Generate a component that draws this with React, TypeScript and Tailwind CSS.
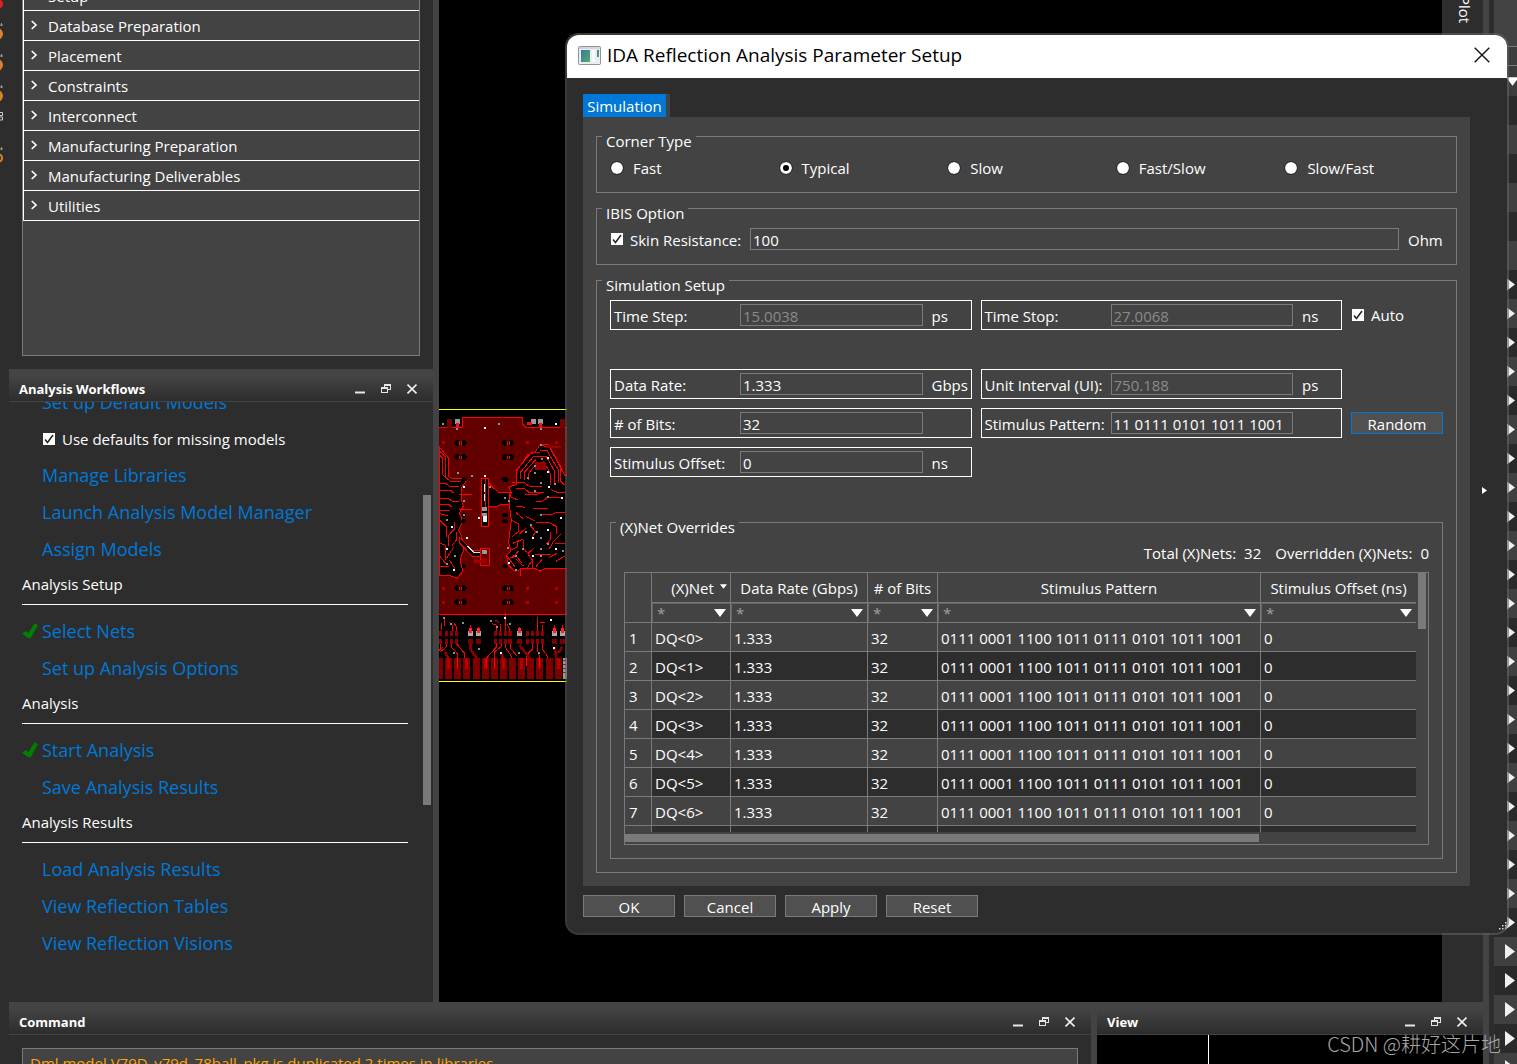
import type { ReactNode } from "react";
import clsx from "clsx";

const FLOW_GROUPS = [
  "Setup",
  "Database Preparation",
  "Placement",
  "Constraints",
  "Interconnect",
  "Manufacturing Preparation",
  "Manufacturing Deliverables",
  "Utilities",
];

const CORNERS = ["Fast", "Typical", "Slow", "Fast/Slow", "Slow/Fast"];

const PATTERN = "0111 0001 1100 1011 0111 0101 1011 1001";

const NETS = ["DQ<0>", "DQ<1>", "DQ<2>", "DQ<3>", "DQ<4>", "DQ<5>", "DQ<6>", "DQ<7>"];

const COLUMNS = ["(X)Net", "Data Rate (Gbps)", "# of Bits", "Stimulus Pattern", "Stimulus Offset (ns)"];

/* ---------- small drawings ---------- */

function CheckMark() {
  return (
    <svg viewBox="0 0 16 16" className="size-4" aria-hidden="true">
      <path d="M0 10.5 4 8l2.300 2.300L12.500.5 16 2 8.500 15.500 5 14.500Z" fill="#008000" />
    </svg>
  );
}

function DockIcons({ name }: { name: string }) {
  return (
    <div className="flex items-center gap-4">
      <button type="button" aria-label={`Minimize ${name}`}>
        <svg viewBox="0 0 10 12" className="h-3 w-2.5">
          <path d="M0 9.500h10" stroke="#e6e6e6" strokeWidth="2" />
        </svg>
      </button>
      <button type="button" aria-label={`Float ${name}`}>
        <svg viewBox="0 0 10 12" className="h-3 w-2.5" fill="#e6e6e6">
          <path d="M3 1h7v6H7V6h2V3H4v1H3Z" />
          <path fillRule="evenodd" d="M0 4h7v6H0ZM1 6v3h5V6Z" />
        </svg>
      </button>
      <button type="button" aria-label={`Close ${name}`}>
        <svg viewBox="0 0 10 12" className="h-3 w-2.5">
          <path d="m.5 1.500 9 9m0-9-9 9" stroke="#f2f2f2" strokeWidth="1.600" />
        </svg>
      </button>
    </div>
  );
}

function DownTriangle({ className }: { className?: string }) {
  return (
    <svg viewBox="0 0 12 8" className={className} aria-hidden="true">
      <path d="M0 0h12L6 8Z" fill="#fff" />
    </svg>
  );
}

function AppIcon() {
  return (
    <svg viewBox="0 0 23 19" className="h-[19px] w-[23px]" aria-hidden="true">
      <defs>
        <linearGradient id="pane" x1="0" y1="0" x2="1" y2="1">
          <stop offset="0" stopColor="#3f73a0" />
          <stop offset="1" stopColor="#4fb06e" />
        </linearGradient>
      </defs>
      <rect x=".5" y=".5" width="22" height="18" rx="1" fill="#e9edf1" stroke="#8d949b" />
      <rect x="1" y="1" width="21" height="2" fill="#cfd6dd" />
      <rect x="3" y="4" width="9" height="12" fill="url(#pane)" />
      <rect x="14" y="4" width="3" height="12" fill="#f8f8f8" />
      <rect x="19" y="4" width="2" height="7" fill="url(#pane)" />
    </svg>
  );
}

const VIA_ROWS = [128, 171, 564, 606];
const VIA_COLS = [74, 216];
const DOTS: [number, number][] = [
  [147, 84], [21, 72], [190, 72], [360, 72], [64, 88], [314, 88], [84, 261], [84, 303], [84, 345], [93, 414],
  [66, 219], [108, 228], [147, 228], [162, 261], [207, 294], [129, 354], [216, 444], [219, 303], [33, 447],
  [57, 468], [33, 492], [54, 510], [261, 447], [240, 468], [219, 489], [240, 510], [315, 447], [291, 468],
  [315, 468], [336, 432], [360, 447], [382, 453], [315, 414], [291, 414], [270, 396], [303, 396], [336, 390],
  [315, 345], [285, 375], [375, 354], [297, 273], [315, 249], [339, 261], [357, 252], [336, 291], [378, 294],
  [276, 234], [297, 219], [336, 216], [297, 198], [318, 177], [336, 174], [315, 135], [33, 360], [48, 381],
  [24, 654], [165, 663], [207, 654], [54, 759], [129, 747], [195, 759], [249, 759], [310, 759], [354, 744],
  [45, 672], [80, 668], [345, 660], [182, 680], [222, 672],
];
const PADS = [14, 31, 46, 61, 104, 127, 179, 194, 209, 222, 250, 274, 289, 305, 319, 355, 379];

/** Copper layer of the memory board visible left of the dialog. */
function BoardCanvas() {
  return (
    <svg
      viewBox="9 0 384 870"
      className="h-[290px] w-32"
      fill="none"
      shapeRendering="crispEdges"
      aria-label="Board layout"
    >
      <path d="M9 80h71V52h180v28h133v563H9Z" fill="#620000" />
      <path d="M260 40h133v40H269l-9-10Z" fill="#000" />
      <path d="M9 82h71V52h180v21l9 9h124M9 642h384" stroke="#f00" strokeWidth="3" />
      <path d="M9 28h384M9 844h384" stroke="#ff0" strokeWidth="3" />

      {/* routed areas without plane fill */}
      <path
        d="M9 140 38 175v55l10 6h28l14 8-14 20v34l6 20-12 22 10 24-12 26 8 18 8 40-12 30 8 36-16 20-24-8H9Z"
        fill="#000"
        stroke="#f00"
        strokeWidth="3"
      />
      <path
        d="m312 134 30 10 44 82h10v280h-70l-14 8-14-8h-40l-20 8-22-20-4-28 12-12-6-28 8-66-8-60 8-20-8-18 22-8v-38l36-52 22-8Z"
        fill="#000"
        stroke="#f00"
        strokeWidth="3"
      />
      <path d="M136 236h22v142h-22z" fill="#000" stroke="#f00" strokeWidth="3" />
      <path d="M158 250l30 28h32v34h-22l-16 8h-24Z" fill="#000" stroke="#f00" strokeWidth="3" />
      <path d="M70 412l40 40h24v16h-26l-38-40Z" fill="#000" stroke="#f00" strokeWidth="3" />
      <path d="M134 445h26v51h-26z" fill="#620000" stroke="#f00" strokeWidth="3" />
      <path d="M70 283h38M70 328h38M254 504v24" stroke="#f00" strokeWidth="3" />
      <path d="M114 484h38" stroke="#a80000" strokeWidth="9" />

      {/* left escape traces */}
      <path
        d="M9 152l18 18v64M9 164l9 9v50l24 20h34M9 250h20l12 9h28M9 272h36l10 8M9 294h24l16 9h20M9 312h28l10 10M9 330h32M9 340l28 8M12 362l20 20v28M54 366v22l-18 20v30M60 396v26l-12 14M9 428l20 8v44M54 440l-22 34M12 470l22 26M40 480l18 28M9 500h30"
        stroke="#f00"
        strokeWidth="3"
      />
      {/* right escape traces */}
      <path
        d="M242 232v-22l44-52h26M254 236v-20l38-46h36M266 240v-24l34-38M278 240v-20l26-32h24M312 134h26l36 66v44l12 12M312 150h20l34 58v42M318 168h12l26 46v38M322 184l20 34v36M300 200l6-14h14l8 20-24 4M228 246h34l20 14h36M240 264h24l14 12h46M268 284h36l12-8M344 268l22 10h20M226 292l20 8M240 318l28 4M300 304h20l14-12h46M292 324h44M318 344h30l14-8h24M240 338l22 18M270 350l28 14M300 366h36l26 14v22M226 360l22 12v22l-20 16M250 402l20-18M282 376l18 20-12 16M342 396v24l-10 12M374 404l-20 18-14 24M388 430l-30 2M230 430l30-12M222 452l22-12v-18M248 452l-18 22M262 420v24l26 34v26M274 462l20-18M296 462h50M318 478l-18 22M338 474l24-14M360 484l26-16M240 478l22 20M212 466l26 36M220 476l18-12 18 24M272 508l14-24"
        stroke="#f00"
        strokeWidth="3"
      />
      <path d="M300 190h26v16h-26zM330 142h44" fill="#800" stroke="#900" strokeWidth="6" />

      {/* centre component */}
      <path d="M147 228v92" stroke="#f00" strokeWidth="3" />
      <path d="M146 252v24M146 282v20" stroke="#fff" strokeWidth="3" />
      <path d="M138 320h16v12h-16zM138 340h16v8h-16zM138 450h16v12h-16z" fill="#999" />
      <path d="M140 348h13v18h-13z" fill="#eee" />
      <path d="M95 438l18 18h18" stroke="#ddd" strokeWidth="3" />
      <path d="M138 474h15v15h-15z" fill="#900" />

      {/* decoupling vias */}
      {VIA_ROWS.map((y) =>
        VIA_COLS.map((x) => (
          <g key={`${x}-${y}`}>
            <path d={`M${x - 20} ${y}l7-8h8l5 4 5-4h8l6 8-6 9h-8l-5-4-5 4h-8Z`} fill="#000" />
            <path d={`M${x - 3} ${y - 4}v10M${x + 3} ${y - 4}v10`} stroke="#f00" strokeWidth="3" />
          </g>
        ))
      )}
      {[128, 564, 606].map((y) => (
        <path key={y} d={`M270 ${y}h9M357 ${y}h9M18 ${y}h9`} stroke="#a00" strokeWidth="9" />
      ))}
      {[238, 345, 363, 498].map((y) => (
        <path key={y} d={`M78 ${y - 6}h8l6 6-6 7h-8zM202 ${y - 6}h10l6 6-6 7h-10l-6-7z`} fill="#000" />
      ))}
      <path d="M33 57h15v26H33zM372 57h15v26h-15z" fill="#700" />
      <path d="M57 57h15v14H57zM306 57h15v14h-15zM285 57h15v14h-15z" fill="#999" />
      <path d="M60 68h10v14H60zM309 68h10v14h-10zM274 66h14v9h-14z" fill="#e11" />

      {/* connector strip */}
      <path d="M9 647h384v126H9z" fill="#000" />
      <path
        d="M24 655v24M16 690v-20M48 695v-20l-9-9M62 695v-14l-8-12M104 690v-14M127 690v-10M180 695v-20l-12-4M194 695v-24M207 640v34l3 18M222 692l-8-20M250 690v-10M305 692v-40M319 692v-16M312 667h15M355 690v-14M379 690v-14M190 668l-12-8"
        stroke="#f00"
        strokeWidth="3"
      />
      {PADS.map((x) => (
        <path key={x} d={`M${x - 5} 694h10v14h-10zM${x - 5} 717h10v14h-10z`} fill="#900000" />
      ))}
      {[104, 127, 250, 355, 379].map((x) => (
        <g key={x}>
          <path d={`M${x - 8} 692h15v16h-15z`} fill="#aaa" />
          <path d={`M${x - 5} 683h9v16h-9z`} fill="#f22" />
          <path d={`M${x - 8} 717h15v14h-15z`} fill="#700" />
        </g>
      ))}
      <path
        d="M9 752l12-10M14 731v14l-5 6M31 731v10l-20 16M46 731v10l18 20v45M61 731l24 28v40M150 806v-30l30-34v-11M175 806v-50l20-15v-10M209 731v12l17 26v35M222 731v12l22 26M289 731v16l-18 20v30M305 731v20l5 18v30M319 731v16l14 20v38"
        stroke="#f00"
        strokeWidth="3"
      />
      <path
        d="M104 731v18l19 26v12M27 756l10 18M196 760l6 20M250 735l32 40M355 740l6 34M379 740l-8 14-14 4"
        stroke="#8a0000"
        strokeWidth="8"
      />
      {Array.from({ length: 14 }, (_, i) => (
        <g key={i}>
          <path d={`M${Math.round(i * 27.4)} 774h21v63h-21z`} fill="#7c0000" />
          {i % 2 === 1 && <path d={`M${Math.round(i * 27.4) + 6} 774h9v33h-9z`} fill="#b80000" />}
        </g>
      ))}
      <path d="M64 774v32M150 774v30M175 774v32M310 774v24" stroke="#f00" strokeWidth="3" />
      <path d="M381 774h12v63h-12z" fill="#999" />
      <path d="M381 782h10M381 794h8M381 806h10M381 818h8" stroke="#b00" strokeWidth="3" />
      {DOTS.map(([x, y], i) => (
        <rect key={i} x={x - 3} y={y - 3} width="6" height="6" fill={i % 3 === 0 ? "#fff" : "#8f8f8f"} />
      ))}
    </svg>
  );
}

/* ---------- docked panels ---------- */

function DockTitle({ title }: { title: string }) {
  return (
    <div className="flex h-[33px] shrink-0 items-center justify-between border-b border-[#434343] bg-linear-to-b from-[#444] from-20% to-[#2d2d2d] pt-2 pr-4 pl-2.5">
      <h2 className="text-[13px] leading-5 font-bold">{title}</h2>
      <DockIcons name={title} />
    </div>
  );
}

function FlowLink({ children, done }: { children: ReactNode; done?: boolean }) {
  return (
    <div className="flex h-[37px] items-center pb-0.5">
      <span className="w-5">{done && <CheckMark />}</span>
      <a href="#" className="text-[18px] leading-6 text-[#0078d7]">
        {children}
      </a>
    </div>
  );
}

function FlowHeading({ children }: { children: ReactNode }) {
  return <h3 className="mr-[25px] mb-2 flex h-[37px] items-center border-b border-white pb-1">{children}</h3>;
}

function LeftDock() {
  return (
    <div className="flex w-[424px] shrink-0 flex-col">
      <div className="mx-[13px] flex h-[356px] shrink-0 flex-col overflow-hidden border border-t-0 border-[#7a7a7a] bg-[#434343]">
        <ul className="-mt-[19px] border-l border-white">
          {FLOW_GROUPS.map((g) => (
            <li key={g} className="flex h-[30px] items-center border-b border-white">
              <svg viewBox="0 0 6 10" className="mr-[11px] mb-0.5 ml-[7px] h-2.5 w-1.5" fill="none" aria-hidden="true">
                <path d="m.7 1 4.300 4-4.300 4" stroke="#fff" strokeWidth="1.600" />
              </svg>
              {g}
            </li>
          ))}
        </ul>
      </div>
      <div className="mt-[13px]">
        <DockTitle title="Analysis Workflows" />
      </div>
      <div className="flex min-h-0 flex-1 overflow-hidden">
        <div className="-mt-[18px] flex-1 pl-[13px]">
          <FlowLink>Set up Default Models</FlowLink>
          <label className="flex h-9 items-center pl-[21px]">
            <Tick defaultChecked />
            <span className="ml-[7px]">Use defaults for missing models</span>
          </label>
          <FlowLink>Manage Libraries</FlowLink>
          <FlowLink>Launch Analysis Model Manager</FlowLink>
          <FlowLink>Assign Models</FlowLink>
          <FlowHeading>Analysis Setup</FlowHeading>
          <FlowLink done>Select Nets</FlowLink>
          <FlowLink>Set up Analysis Options</FlowLink>
          <FlowHeading>Analysis</FlowHeading>
          <FlowLink done>Start Analysis</FlowLink>
          <FlowLink>Save Analysis Results</FlowLink>
          <FlowHeading>Analysis Results</FlowHeading>
          <FlowLink>Load Analysis Results</FlowLink>
          <FlowLink>View Reflection Tables</FlowLink>
          <FlowLink>View Reflection Visions</FlowLink>
        </div>
        <div className="-ml-2.5 w-2.5 pt-[93px]">
          <div className="h-[310px] w-2 bg-[#7a7a7a]" />
        </div>
      </div>
    </div>
  );
}

/* ---------- form parts ---------- */

function Tick({ defaultChecked }: { defaultChecked?: boolean }) {
  return (
    <span className="grid size-3 shrink-0">
      <input
        type="checkbox"
        defaultChecked={defaultChecked}
        className="peer col-start-1 row-start-1 size-3 appearance-none bg-white"
      />
      <svg
        viewBox="0 0 12 12"
        className="pointer-events-none col-start-1 row-start-1 hidden size-3 peer-checked:block"
        fill="none"
      >
        <path d="m2 6.500 2.500 3L10 2" stroke="#222" strokeWidth="1.500" />
      </svg>
    </span>
  );
}

function Group({ title, children, className }: { title: string; children: ReactNode; className?: string }) {
  return (
    <fieldset className={clsx("min-w-0 border border-[#7a7a7a] pl-[5px]", className)}>
      <legend className="px-1 pt-[11px] pb-px leading-[17px]">{title}</legend>
      {children}
    </fieldset>
  );
}

type FieldProps = { id: string; label: string; value: string; unit?: string; disabled?: boolean };

function Field({ id, label, value, unit, disabled }: FieldProps) {
  return (
    <div className="flex h-[30px] min-w-0 items-center border border-white px-[3px]">
      <label htmlFor={id} className="w-[126px] shrink-0 whitespace-nowrap pt-0.5">
        {label}
      </label>
      <input
        id={id}
        defaultValue={value}
        disabled={disabled}
        className="h-[22px] min-w-0 flex-1 border border-[#7a7a7a] bg-transparent px-0.5 pt-0.5 disabled:text-[#8a8a8a]"
      />
      <span className="ml-[9px] w-9 shrink-0 pt-0.5">{unit}</span>
    </div>
  );
}

function PushButton({ children, accent }: { children: ReactNode; accent?: boolean }) {
  return (
    <button
      type="button"
      className={clsx(
        "flex h-[22px] w-[92px] items-center justify-center border bg-[#505050] pt-0.5",
        accent ? "border-[#0078d7]" : "border-[#7a7a7a]"
      )}
    >
      {children}
    </button>
  );
}

function NetTable() {
  return (
    <div className="border border-[#7a7a7a]">
      <div className="flex">
        <div className="h-[259px] min-w-0 flex-1 overflow-hidden">
          <table className="w-full table-fixed border-separate border-spacing-0 whitespace-nowrap">
            <colgroup>
              <col className="w-[27px]" />
              <col className="w-[79px]" />
              <col className="w-[137px]" />
              <col className="w-[70px]" />
              <col className="w-[323px]" />
              <col />
            </colgroup>
            <thead>
              <tr className="h-[30px]">
                <td rowSpan={2} className="border-r border-b border-[#7a7a7a]" />
                {COLUMNS.map((c, i) => (
                  <th
                    key={c}
                    scope="col"
                    className="border-r border-b border-[#7a7a7a] p-0 font-normal last:border-r-0"
                  >
                    <span className={clsx("flex items-center justify-center", i === 0 && "pl-4")}>
                      {c}
                      {i === 0 && <DownTriangle className="mb-0.5 ml-1.5 h-[5px] w-[7px]" />}
                    </span>
                  </th>
                ))}
              </tr>
              <tr className="h-5">
                {COLUMNS.map((c) => (
                  <td
                    key={c}
                    className="border-t border-r border-b border-l border-[#7a7a7a] border-t-[#656565] border-l-[#656565] p-0 last:border-r-0"
                  >
                    <span className="flex h-[18px] items-center pr-1">
                      <input
                        aria-label={`Filter ${c}`}
                        placeholder="*"
                        className="h-[18px] min-w-0 flex-1 bg-transparent px-1 placeholder:text-[#a0a0a0]"
                      />
                      <DownTriangle className="h-2 w-3 shrink-0" />
                    </span>
                  </td>
                ))}
              </tr>
            </thead>
            <tbody>
              {NETS.map((net, i) => (
                <tr key={net} className="h-[29px] odd:bg-[#434343] even:bg-[#2d2d2d]">
                  <th
                    scope="row"
                    className="border-r border-b border-[#7a7a7a] bg-[#434343] p-0 pt-0.5 pl-1 text-left font-normal"
                  >
                    {i + 1}
                  </th>
                  {[net, "1.333", "32", PATTERN, "0"].map((cell, j) => (
                    <td key={j} className="border-r border-b border-[#7a7a7a] p-0 pt-0.5 pl-[3px] last:border-r-0">
                      {cell}
                    </td>
                  ))}
                </tr>
              ))}
            </tbody>
          </table>
        </div>
        <div className="w-3 pl-0.5">
          <div className="h-14 w-2 bg-[#7a7a7a]" />
        </div>
      </div>
      <div className="py-0.5">
        <div className="h-2 w-[79%] bg-[#7a7a7a]" />
      </div>
    </div>
  );
}

function SetupDialog() {
  return (
    <section
      role="dialog"
      aria-labelledby="dialog-title"
      className="absolute top-[35px] right-2.5 left-[567px] overflow-hidden rounded-xl bg-[#2d2d2d] shadow-[0_0_0_2px_#60606099]"
    >
      <header className="flex h-[43px] items-center bg-white pr-[17px] pb-[3px] pl-[11px] text-black">
        <AppIcon />
        <h1 id="dialog-title" className="ml-1.5 flex-1 text-[19px] leading-6">
          IDA Reflection Analysis Parameter Setup
        </h1>
        <button type="button" aria-label="Close dialog">
          <svg viewBox="0 0 16 16" className="size-4">
            <path d="m.7.7 14.600 14.600m0-14.600L.7 15.300" stroke="#111" strokeWidth="1.400" />
          </svg>
        </button>
      </header>

      <div className="flex pt-4 pb-4 pl-4">
        <div className="min-w-0 flex-1">
          <div className="flex" role="tablist">
            <button
              type="button"
              role="tab"
              aria-selected="true"
              className="flex h-[23px] w-[83px] items-center justify-center bg-[#0078d7]"
            >
              Simulation
            </button>
            <span className="w-1 bg-[#434343]" />
          </div>

          <div className="flex flex-col gap-px bg-[#434343] px-[13px] pt-[5px] pb-[13px]">
            <Group title="Corner Type" className="pr-0.5">
              <div className="grid grid-cols-5 pt-[7px] pb-3.5 pl-[9px]">
                {CORNERS.map((c) => (
                  <label key={c} className="flex h-5 items-center">
                    <input
                      type="radio"
                      name="corner"
                      defaultChecked={c === "Typical"}
                      className="size-3 appearance-none rounded-full border-white bg-white outline outline-[#2a2a2a] checked:border-3 checked:bg-black"
                    />
                    <span className="ml-2.5">{c}</span>
                  </label>
                ))}
              </div>
            </Group>

            <Group title="IBIS Option" className="pr-[13px]">
              <div className="flex items-center pt-[5px] pb-3.5 pl-[9px]">
                <label className="flex w-[139px] shrink-0 items-center whitespace-nowrap">
                  <Tick defaultChecked />
                  <span className="ml-[7px] pt-0.5">Skin Resistance:</span>
                </label>
                <input
                  aria-label="Skin Resistance"
                  defaultValue="100"
                  className="h-[22px] min-w-0 flex-1 border border-[#7a7a7a] bg-transparent px-0.5 pt-0.5"
                />
                <span className="ml-[9px] w-[35px] pt-0.5">Ohm</span>
              </div>
            </Group>

            <Group title="Simulation Setup" className="pr-[13px] pb-[13px]">
              <div className="pt-[5px] pl-2">
                <div className="grid grid-cols-[1fr_1fr_92px] gap-[9px]">
                  <Field id="time-step" label="Time Step:" value="15.0038" unit="ps" disabled />
                  <Field id="time-stop" label="Time Stop:" value="27.0068" unit="ns" disabled />
                  <label className="flex items-center pl-px">
                    <Tick defaultChecked />
                    <span className="ml-[7px]">Auto</span>
                  </label>
                </div>
                <div className="mt-[39px] grid grid-cols-[1fr_1fr_92px] items-center gap-[9px]">
                  <Field id="data-rate" label="Data Rate:" value="1.333" unit="Gbps" />
                  <Field id="unit-interval" label="Unit Interval (UI):" value="750.188" unit="ps" disabled />
                  <span />
                  <Field id="bits" label="# of Bits:" value="32" />
                  <Field id="pattern" label="Stimulus Pattern:" value={PATTERN.slice(-22)} />
                  <PushButton accent>Random</PushButton>
                  <Field id="offset" label="Stimulus Offset:" value="0" unit="ns" />
                </div>

                <Group title="(X)Net Overrides" className="mt-[31px] pr-[13px] pb-[13px]">
                  <div className="pt-1.5 pl-2">
                    <p className="mb-[9px] flex h-5 items-center justify-end">
                      <span>Total (X)Nets:</span>
                      <span className="ml-2">32</span>
                      <span className="ml-3.5">Overridden (X)Nets:</span>
                      <span className="ml-2">0</span>
                    </p>
                    <NetTable />
                  </div>
                </Group>
              </div>
            </Group>
          </div>

          <div className="mt-[9px] flex gap-[9px]">
            <PushButton>OK</PushButton>
            <PushButton>Cancel</PushButton>
            <PushButton>Apply</PushButton>
            <PushButton>Reset</PushButton>
          </div>
        </div>

        <div className="flex w-[37px] items-center pb-[31px] pl-3">
          <button type="button" aria-label="Expand side panel">
            <svg viewBox="0 0 5 7" className="h-[7px] w-[5px]">
              <path d="M0 0l5 3.500L0 7Z" fill="#fff" />
            </svg>
          </button>
        </div>
      </div>

      <svg viewBox="0 0 9 9" className="absolute right-0 bottom-0.5 size-[9px]" fill="#ddd" aria-hidden="true">
        <path d="M7 0h1.500v1.500H7zM4 3h1.500v1.500H4zM7 3h1.500v1.500H7zM1 6h1.500v1.500H1zM4 6h1.500v1.500H4z" />
      </svg>
    </section>
  );
}

/* ---------- window edges ---------- */

function ToolSliver() {
  return (
    <div className="w-[9px] shrink-0">
      <svg viewBox="0 0 9 170" className="h-[170px] w-[9px]" fill="none" aria-hidden="true">
        <circle cx="-2" cy="4" r="5" fill="#e02020" />
        {[34, 65, 96].map((y) => (
          <g key={y}>
            <circle cx="-3" cy={y} r="6" fill="#d9822b" />
            <path d={`M0 ${y - 9}h3M1.500 ${y - 11}v3`} stroke="#999" />
          </g>
        ))}
        <path d="M0 112.500h2.500v3H0m0 1.500h2.500v3H0" stroke="#ccc" />
        <circle cx="-2" cy="158" r="4" stroke="#d9822b" strokeWidth="2" />
        <path d="M0 149h3M1.500 147v3" stroke="#999" />
      </svg>
    </div>
  );
}

function RightList() {
  return (
    <div className="flex w-7 shrink-0 flex-col overflow-hidden pl-[5px]">
      <div className="h-[46px] shrink-0 bg-[#434343]" />
      <div className="h-5 shrink-0 border-y border-[#7a7a7a] bg-[#3c3c3c]" />
      <div className="h-[30px] shrink-0 bg-[#3c3c3c] pt-2.5">
        <DownTriangle className="ml-3 h-[11px] w-[13px]" />
      </div>
      {Array.from({ length: 34 }, (_, i) => (
        <div key={i} className="flex h-[29px] shrink-0 items-center pl-[11px] odd:bg-[#404040] even:bg-[#2a2a2a]">
          {i > 5 && (
            <svg viewBox="0 0 10 15" className="h-[15px] w-2.5" aria-hidden="true">
              <path d="M0 0l10 7.500L0 15Z" fill="#f0f0f0" />
            </svg>
          )}
        </div>
      ))}
    </div>
  );
}

export default function App() {
  return (
    <main className="relative flex h-screen w-full overflow-hidden bg-[#2d2d2d] font-['Open_Sans','Noto_Sans_CJK_SC',sans-serif] text-[15px] leading-5 text-white">
      <ToolSliver />
      <div className="flex min-w-0 flex-1 flex-col">
        <div className="flex min-h-0 flex-1">
          <LeftDock />
          <div className="w-1.5 shrink-0 bg-[#434343]" />
          <div className="min-w-0 flex-1 bg-black pt-[400px]">
            <BoardCanvas />
          </div>
          <div className="w-[41px] shrink-0 overflow-hidden">
            <button type="button" className="-mt-1 ml-[13px] [writing-mode:vertical-rl]">
              Plot
            </button>
          </div>
        </div>
        <div className="flex h-[62px] shrink-0">
          <div className="min-w-0 flex-1 overflow-hidden">
            <DockTitle title="Command" />
            <p className="mt-[13px] mr-[13px] ml-[13px] border border-[#7a7a7a] bg-[#434343] px-[7px] pt-1 pb-5 text-[#ffa500]">
              Dml model V79D_v79d_78ball_pkg is duplicated 2 times in libraries
            </p>
          </div>
          <div className="w-1.5 shrink-0 bg-[#434343]" />
          <div className="flex w-[386px] shrink-0 flex-col">
            <DockTitle title="View" />
            <div className="flex-1 bg-black pl-[111px]">
              <div className="h-full w-px bg-white" />
            </div>
          </div>
        </div>
      </div>
      <div className="w-1.5 shrink-0 bg-[#434343]" />
      <RightList />

      <SetupDialog />
      <span className="absolute right-4 bottom-1.5 font-['Noto_Sans_CJK_SC',sans-serif] text-[20px] leading-7 font-light text-[#a8a8a8]">
        CSDN @耕好这片地
      </span>
    </main>
  );
}
